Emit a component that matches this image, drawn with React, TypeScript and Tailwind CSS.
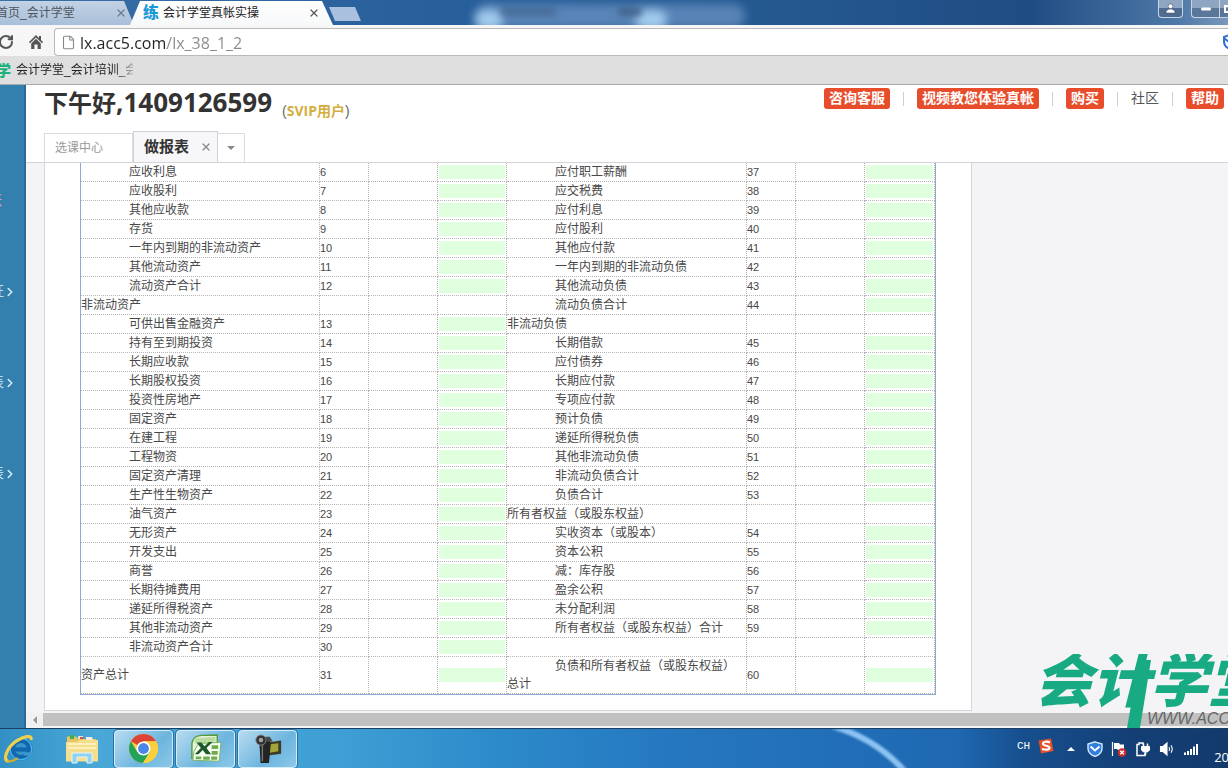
import type { ReactNode } from "react";
import { ChevronRight, File, Minus, RotateCw, X } from "lucide-react";

const CJK = "font-['Liberation_Sans','Noto_Sans_CJK_SC',sans-serif]";

type Side = { name: string; line?: number; top?: boolean; input: boolean };

const item = (name: string, line: number): Side => ({ name, line, input: true });
const heading = (name: string, line?: number, input = false): Side => ({ name, line, top: true, input });

const assets: Side[] = [
  item("应收利息", 6),
  item("应收股利", 7),
  item("其他应收款", 8),
  item("存货", 9),
  item("一年内到期的非流动资产", 10),
  item("其他流动资产", 11),
  item("流动资产合计", 12),
  heading("非流动资产"),
  item("可供出售金融资产", 13),
  item("持有至到期投资", 14),
  item("长期应收款", 15),
  item("长期股权投资", 16),
  item("投资性房地产", 17),
  item("固定资产", 18),
  item("在建工程", 19),
  item("工程物资", 20),
  item("固定资产清理", 21),
  item("生产性生物资产", 22),
  item("油气资产", 23),
  item("无形资产", 24),
  item("开发支出", 25),
  item("商誉", 26),
  item("长期待摊费用", 27),
  item("递延所得税资产", 28),
  item("其他非流动资产", 29),
  item("非流动资产合计", 30),
  heading("资产总计", 31, true),
];

const liabilities: Side[] = [
  item("应付职工薪酬", 37),
  item("应交税费", 38),
  item("应付利息", 39),
  item("应付股利", 40),
  item("其他应付款", 41),
  item("一年内到期的非流动负债", 42),
  item("其他流动负债", 43),
  item("流动负债合计", 44),
  heading("非流动负债"),
  item("长期借款", 45),
  item("应付债券", 46),
  item("长期应付款", 47),
  item("专项应付款", 48),
  item("预计负债", 49),
  item("递延所得税负债", 50),
  item("其他非流动负债", 51),
  item("非流动负债合计", 52),
  item("负债合计", 53),
  heading("所有者权益（或股东权益）"),
  item("实收资本（或股本）", 54),
  item("资本公积", 55),
  item("减：库存股", 56),
  item("盈余公积", 57),
  item("未分配利润", 58),
  item("所有者权益（或股东权益）合计", 59),
  heading(""),
  item("负债和所有者权益（或股东权益）总计", 60),
];

const cell = "border-b border-r border-dotted border-[#b4b4b4] p-0 align-middle h-[19px]";

function SideCells({ side }: { side: Side }) {
  return (
    <>
      <td className={`${cell} ${side.top ? "" : "indent-12"}`}>{side.name}</td>
      <td className={`${cell} text-[11px]`}>{side.line}</td>
      <td className={cell} />
      <td className={`${cell} px-px`}>
        {side.input && (
          <input type="text" aria-label={side.name} className="block h-[14px] w-full bg-[#dfffdf] px-1 text-right text-[11px] outline-none" />
        )}
      </td>
    </>
  );
}

function BalanceTable() {
  return (
    <table className="w-[856px] table-fixed border-separate border-spacing-0 border-x border-b border-[#8fa9d0] text-[12px] leading-[18px] text-[#484848]">
      <colgroup>
        <col className="w-[239px]" />
        <col className="w-[49px]" />
        <col className="w-[69px]" />
        <col className="w-[69px]" />
        <col className="w-[240px]" />
        <col className="w-[49px]" />
        <col className="w-[69px]" />
        <col className="w-[70px]" />
      </colgroup>
      <tbody>
        {assets.map((a, i) => (
          <tr key={i}>
            <SideCells side={a} />
            <SideCells side={liabilities[i]} />
          </tr>
        ))}
      </tbody>
    </table>
  );
}

function TabStrip() {
  return (
    <div className="relative flex h-[25px] shrink-0 items-end overflow-hidden bg-[linear-gradient(to_right,#3a6ea8_0%,#28609c_35%,#24588f_65%,#1f4c83_84%,#4f79a8_96%,#7a98bb_100%)]">
      <div className="absolute left-[475px] top-1 h-6 w-[270px] rounded-full bg-[#6d95c6]/70 blur-[5px]" />
      <div className="absolute left-[475px] top-2.5 h-5 w-7 rounded-full bg-[#b5dcfb]/80 blur-[5px]" />
      <div className="absolute left-[635px] top-2.5 h-5 w-8 rounded-full bg-[#b5dcfb]/80 blur-[5px]" />
      <div className="absolute left-[500px] top-2 h-2 w-14 rounded-full bg-[#3d5b80]/60 blur-[3px]" />
      <div className="absolute left-[618px] top-2 h-2 w-6 rounded-full bg-[#3d5b80]/80 blur-[3px]" />
      <div className="relative flex h-6 w-[134px] items-center justify-between bg-[linear-gradient(to_bottom,#c3d2e4,#a9bfd9)] pr-[7px] text-[12px] text-[#4d5660] [clip-path:polygon(0_0,124px_0,134px_100%,0_100%)]">
        <span className="-ml-1 whitespace-nowrap">首页_会计学堂</span>
        <button type="button" aria-label="关闭">
          <X className="size-3 text-[#6c7b8c]" strokeWidth={2.4} />
        </button>
      </div>
      <div className="relative -ml-1 flex h-6 w-[203px] items-center bg-[linear-gradient(to_bottom,#ffffff,#f7f8f9)] pl-[13px] pr-[13px] text-[12px] text-[#222] [clip-path:polygon(10px_0,192px_0,100%_100%,0_100%)]">
        <span className="text-[16px] font-black leading-none text-[#1b9ad8]">练</span>
        <span className="ml-1 flex-1">会计学堂真帐实操</span>
        <button type="button" aria-label="关闭">
          <X className="size-3 text-[#555]" strokeWidth={2.4} />
        </button>
      </div>
      <button type="button" aria-label="新标签" className="relative -ml-1 mb-1 h-[14px] w-[32px] bg-[#a9c0de] [clip-path:polygon(0_0,26px_0,100%_100%,6px_100%)]" />
      <div className="relative ml-auto flex gap-2 self-start">
        <button type="button" aria-label="用户" className="flex h-[18px] w-[25px] items-center justify-center rounded-b border border-t-0 border-[#c8d5e4] bg-[linear-gradient(to_bottom,#8fa6c3_50%,#4e6b90_50%)]">
          <svg viewBox="0 0 12 12" className="size-[11px]" fill="#fff" stroke="#3c4d63" strokeWidth="0.6">
            <circle cx="6" cy="3.6" r="2.6" />
            <path d="M1 11c0-3 2-4.4 5-4.4s5 1.4 5 4.4z" />
          </svg>
        </button>
        <div className="flex h-[18px] rounded-bl border border-r-0 border-t-0 border-[#c8d5e4] bg-[linear-gradient(to_bottom,#8fa6c3_50%,#5a7699_50%)]">
          <button type="button" aria-label="最小化" className="flex w-[28px] items-center justify-center border-r border-[#c8d5e4]">
            <Minus className="size-3 text-white" strokeWidth={6} />
          </button>
          <button type="button" aria-label="最大化" className="flex w-[8px] items-center justify-end">
            <span className="h-2 w-1 border-2 border-r-0 border-white" />
          </button>
        </div>
      </div>
    </div>
  );
}

function Toolbar() {
  return (
    <div className="flex h-[31px] shrink-0 items-end bg-[#f6f6f7]">
      <button type="button" aria-label="刷新" className="-ml-0.5 mb-1.5">
        <RotateCw className="size-4 text-[#555]" strokeWidth={3} />
      </button>
      <button type="button" aria-label="主页" className="ml-3.5 mb-1.5">
        <svg viewBox="0 0 16 16" className="size-4" fill="#555">
          <path d="M8 1 1 8l1 1.2L8 3.4l6 5.8L15 8l-2-2V2h-2v2z" />
          <path d="M3.2 9.4 8 4.8l4.8 4.6V15H9.6v-4.4H6.4V15H3.2z" />
        </svg>
      </button>
      <div className="ml-[10px] flex h-[28px] min-w-0 flex-1 items-center overflow-hidden rounded-l-sm border border-r-0 border-[#b9b9b9] bg-white">
        <File className="ml-1.5 size-[15px] shrink-0 text-[#888]" strokeWidth={1.8} />
        <input
          type="text"
          aria-label="地址"
          defaultValue="lx.acc5.com/lx_38_1_2"
          className="ml-[4px] min-w-0 flex-1 bg-[linear-gradient(to_right,#222_87px,#8a8a8a_87px)] bg-clip-text pt-0.5 font-['Open_Sans','Noto_Sans_CJK_SC',sans-serif] text-[16px] leading-6 text-transparent outline-none"
        />
        <svg viewBox="0 0 18 18" className="-mr-3 size-[18px] shrink-0" fill="none" stroke="#2f6fd6" strokeWidth="2">
          <path d="M9 1.4 16 4v4.5c0 4-3 6.700-7 8-4-1.300-7-4-7-8V4z" />
          <path d="m2.500 5.500 6.500 5 6.500-5" />
        </svg>
      </div>
    </div>
  );
}

function Bookmarks() {
  return (
    <div className="flex h-[29px] shrink-0 items-center border-b border-[#a9a9a9] bg-[#dfdfdf] text-[12px] text-[#222]">
      <a href="#" className="flex items-center">
        <span className="-ml-1 w-4 text-[15px] font-black leading-none text-[#1cb37d]">学</span>
        <span className="ml-1 w-[117px] overflow-hidden whitespace-nowrap [mask-image:linear-gradient(to_right,#000_98px,#0004_117px)]">会计学堂_会计培训_会计</span>
      </a>
    </div>
  );
}

function Sidebar() {
  const entries = [
    { label: "账", open: false },
    { label: "证", open: true },
    { label: "表", open: true },
    { label: "表", open: true },
  ];
  return (
    <nav className="w-[26px] shrink-0 overflow-hidden border-r-2 border-[#2a6c95] bg-[#337fad] pt-[70px]">
      {entries.map((e, i) => (
        <a key={i} href="#" className="flex h-[91px] items-center text-[14px] text-[#b9dcf0]">
          {e.open ? (
            <>
              <span className="flex w-1 justify-end overflow-hidden">{e.label}</span>
              <ChevronRight className="-ml-px size-[14px] text-[#d6edf9]" strokeWidth={2.6} />
            </>
          ) : (
            <span className="flex w-0.5 justify-end overflow-hidden text-[#e3a0b4]">{e.label}</span>
          )}
        </a>
      ))}
    </nav>
  );
}

function RedLink({ children }: { children: ReactNode }) {
  return (
    <a href="#" className="rounded-[3px] bg-[#e84d2b] px-[5px] text-[14px] font-bold leading-[21px] text-white">
      {children}
    </a>
  );
}

function Divider() {
  return <span className="h-[14px] w-px bg-[#cfcfcf]" />;
}

function Header() {
  return (
    <header className="flex h-[78px] shrink-0 flex-col justify-between border-b border-[#d4d4d8] bg-white">
      <div className="flex items-start justify-between pl-[18px] pr-1">
        <div className="flex h-[38px] items-center">
          <h1 className="whitespace-nowrap text-[24px] font-bold leading-9 text-[#333]">
            下午好<span className="font-['Open_Sans',sans-serif] text-[26px] leading-none">,1409126599</span>
          </h1>
          <span className="ml-2.5 mt-3.5 whitespace-nowrap text-[14px] leading-5 text-[#666]">
            (<b className="font-['Open_Sans','Noto_Sans_CJK_SC',sans-serif] text-[#d6ad3f]">SVIP用户</b>)
          </span>
        </div>
        <div className="mt-[3px] flex items-center gap-[13px] whitespace-nowrap">
          <RedLink>咨询客服</RedLink>
          <Divider />
          <RedLink>视频教您体验真帐</RedLink>
          <Divider />
          <RedLink>购买</RedLink>
          <Divider />
          <a href="#" className="text-[14px] leading-[21px] text-[#555]">社区</a>
          <Divider />
          <RedLink>帮助</RedLink>
        </div>
      </div>
      <div className="ml-[18px] flex items-end">
        <button type="button" className="h-[29px] w-[89px] border border-b-0 border-[#dcdce0] bg-white pl-2.5 text-left text-[12px] text-[#999]">
          选课中心
        </button>
        <div className="flex h-[31px] w-[85px] items-center justify-between border border-b-0 border-[#d0d0d6] bg-[#f7f6f8] pl-2.5 pr-[5px]">
          <button type="button" className="whitespace-nowrap text-[15px] font-bold text-[#333]">做报表</button>
          <button type="button" aria-label="关闭">
            <X className="size-3 text-[#888]" strokeWidth={2.4} />
          </button>
        </div>
        <button type="button" aria-label="更多" className="flex h-[29px] w-[27px] items-center justify-center border border-b-0 border-l-0 border-[#dcdce0] bg-white">
          <span className="size-0 border-x-4 border-t-4 border-x-transparent border-t-[#888]" />
        </button>
      </div>
    </header>
  );
}

function Watermark() {
  return (
    <div className="pointer-events-none absolute bottom-0 right-0 flex w-[194px] flex-col overflow-hidden">
      <div className="whitespace-nowrap text-[58px] font-black italic leading-[56px] text-[#18ab83]">会计学堂</div>
      <div className="ml-[113px] whitespace-nowrap pb-px text-[16px] italic leading-[17px] text-[#666]">WWW.ACC5.COM</div>
      <div className="absolute bottom-0 left-[93px] h-[68px] w-[24px] bg-[#18ab83] [clip-path:polygon(12px_0,24px_0,13px_100%,0_100%)]" />
    </div>
  );
}

function TaskButton({ label, children }: { label: string; children: ReactNode }) {
  return (
    <button
      type="button"
      aria-label={label}
      className="flex h-[38px] w-[59px] items-center justify-center rounded-sm border border-[#d3ecfa] bg-[linear-gradient(135deg,#b8dcf0,#6db5de_60%,#8cc8e8)] shadow-[0_0_0_1px_#2b6fa3]"
    >
      {children}
    </button>
  );
}

function IeIcon() {
  return (
    <svg viewBox="0 0 34 32" className="h-[30px] w-8" fill="none">
      <circle cx="19" cy="16" r="9.500" stroke="#1268b0" strokeWidth="6" />
      <circle cx="19" cy="16" r="11.500" stroke="#49b4e8" strokeWidth="1.500" />
      <path d="M10 16.500h18" stroke="#1268b0" strokeWidth="4.500" />
      <path d="M22 19.500h10v3.500h-10z" fill="#3e98cd" />
      <path d="M5 29C-1 27 5 13 15 7c7-4.500 15-6 15-2" stroke="#f0cf4c" strokeWidth="3.400" strokeLinecap="round" />
      <path d="M5 29c3 1 7-1 10-3" stroke="#d9ac25" strokeWidth="2" strokeLinecap="round" />
    </svg>
  );
}

function FolderIcon() {
  return (
    <svg viewBox="0 0 34 30" className="h-[30px] w-[34px]">
      <path d="M2 5V2.500h9L13 5h18v22H2z" fill="#e8c562" />
      <path d="M5 1h4v4H5z" fill="#3faf4a" />
      <path d="M13 2h5v3h-5z" fill="#e8e2d0" />
      <path d="M15 3h3v2h-3z" fill="#d65436" />
      <path d="M21 3h6l1 3h-7z" fill="#f4efdc" />
      <path d="M1 8h11l2-2h19v21.500H1z" fill="#f5df8e" />
      <path d="M3 10h28M3 14h28" stroke="#fff6c9" strokeWidth="1.500" />
      <path d="M7 29V19h20v10h-5v-6H12v6z" fill="#8fd2f2" stroke="#e3f5ff" strokeWidth="1" />
    </svg>
  );
}

function ChromeIcon() {
  return (
    <svg viewBox="0 0 32 32" className="size-[31px]">
      <circle cx="16" cy="16" r="15" fill="#f8cf3d" />
      <path d="M16 16 3 8.500A15 15 0 0 1 29 8.500H16z" fill="#dc4437" />
      <path d="M3 8.500A15 15 0 0 0 15.500 31L22.500 19.500 16 16 9.500 19.500z" fill="#23a35a" />
      <path d="M16 8.500h13a15 15 0 0 1-13.500 22.500l7-11.500z" fill="#f8cf3d" />
      <circle cx="16" cy="16" r="7.200" fill="#fff" />
      <circle cx="16" cy="16" r="5.600" fill="#4a86e8" />
    </svg>
  );
}

function ExcelIcon() {
  return (
    <svg viewBox="0 0 34 32" className="h-[30px] w-8">
      <path d="M2 26V10C3 4 6 2 12 1.500L29 1v9H12v16z" fill="#e6f3da" stroke="#539a3f" strokeWidth="1.500" />
      <path d="M5 4.500 27 3v5L5 10z" fill="#b9dca0" />
      <path d="m9 10 24-1-2 20-28-1 1-9z" fill="#f8fff2" stroke="#7bb25f" strokeWidth="1" />
      <path d="M23 12h7v4h-7zM23 18h6.500v4H23zM22.500 24h6.500v3.500h-6.500zM14 24h7v3.500h-7zM6 24h6v3h-6z" fill="#70ac4e" />
      <path d="M7 9h5l3.500 4L20 8.500h4L17.500 15l5 6.500h-5.500L13.500 17 9 21.500H5L11.500 15z" fill="#1f5a2b" />
    </svg>
  );
}

function CameraIcon() {
  return (
    <svg viewBox="0 0 34 32" className="h-[30px] w-8">
      <path d="M17 9 31 7v14l-14 2z" fill="#3c3d24" />
      <path d="m19 11 9-1.200v8.700l-9 1.500z" fill="#a3a43a" />
      <path d="M9 5h9l2 5-2 21H9L8 12z" fill="#242424" />
      <path d="M11 12v17" stroke="#777" strokeWidth="1.500" />
      <circle cx="9.500" cy="6.500" r="5.500" fill="#333" stroke="#888" strokeWidth="1" />
      <circle cx="9.500" cy="6.500" r="2.400" fill="#9fa4ab" />
      <path d="M14 3h5l3 5h-6z" fill="#4c4c4c" />
    </svg>
  );
}

function Tray() {
  return (
    <div className="relative ml-auto flex h-full items-center text-white">
      <span className="mb-1 font-['Liberation_Mono',monospace] text-[11px]">CH</span>
      <svg viewBox="0 0 16 16" className="mb-1.5 ml-2 size-4">
        <path d="m.5 2.500 12.500-2L15.500 13 3 15.500z" fill="#e8502c" />
        <path d="M12 4.500C9 3 5 3.500 5 5.800c0 2.400 6.500 1.600 6.500 4 0 2.200-4.500 2.400-7.500.9" fill="none" stroke="#fff" strokeWidth="2.200" />
      </svg>
      <span className="ml-[13px] size-0 border-x-4 border-b-4 border-x-transparent border-b-white" />
      <svg viewBox="0 0 16 16" className="ml-3 size-4" fill="none">
        <path d="M8 .8 15 3v4.500c0 4-3 6.500-7 8-4-1.500-7-4-7-8V3z" fill="#2f7ee0" stroke="#d5ecff" strokeWidth="1.400" />
        <path d="m3.500 5.500 4.500 4 4.500-4" stroke="#fff" strokeWidth="2" />
      </svg>
      <svg viewBox="0 0 16 16" className="ml-2 size-4">
        <path d="M1.500 1v14" stroke="#fff" strokeWidth="1.200" />
        <path d="M3 2h5l1 1.500h4V9H7L6 8H3z" fill="#fff" />
        <circle cx="11" cy="11.500" r="4.300" fill="#cf2c2c" />
        <path d="m9.200 9.700 3.600 3.600m0-3.600-3.600 3.600" stroke="#fff" strokeWidth="1.400" />
      </svg>
      <svg viewBox="0 0 16 16" className="ml-2 size-4" fill="none" stroke="#fff">
        <path d="M8 3.500V2H4v1.500H2v11h8V12" strokeWidth="1.500" />
        <path d="M8.500 2.500v3m4-3v3" strokeWidth="1.500" />
        <path d="M6.500 5.500h8v3.500l-2 2h-4l-2-2z" fill="#fff" />
        <path d="M10.500 11v3" strokeWidth="1.500" />
      </svg>
      <svg viewBox="0 0 16 16" className="ml-2 size-4" fill="none" stroke="#fff" strokeWidth="1.100">
        <path d="M1.500 5.500H4L8 2v12l-4-3.500H1.500z" fill="#fff" />
        <path d="M10 6q1.300 2 0 4M12 4.300q2.500 3.700 0 7.400" />
      </svg>
      <svg viewBox="0 0 16 16" className="ml-2 size-4" fill="#fff">
        <path d="M1 11.500h2V14H1zM4 10h2v4H4zM7 8h2v6H7zM10 5.500h2V14h-2zM13 3h2v11h-2z" />
      </svg>
      <span className="-mr-px ml-[15px] mt-4 font-['Open_Sans',sans-serif] text-[13px] leading-4">20</span>
    </div>
  );
}

function Taskbar() {
  return (
    <footer className="relative flex h-10 shrink-0 items-center overflow-hidden border-t border-[#1b3f63] bg-[linear-gradient(to_right,#3290c4_0%,#4aa8d8_8%,#3d9fd4_28%,#2d8bca_40%,#2577c0_55%,#1f68b2_78%,#17508f_83%,#143f76_92%,#133a6c_100%)]">
      <svg viewBox="0 0 120 40" className="absolute left-[820px] top-0 h-10 w-[120px] blur-[1px]" fill="none" stroke="#8cc3f2" strokeWidth="6">
        <path d="M8-4Q56 8 88 46" />
      </svg>
      <div className="relative flex items-center">
        <button type="button" aria-label="浏览器" className="ml-[3px]"><IeIcon /></button>
        <button type="button" aria-label="文件夹" className="ml-[30px]"><FolderIcon /></button>
        <div className="ml-[15px] flex gap-[3px]">
          <TaskButton label="网页"><ChromeIcon /></TaskButton>
          <TaskButton label="表格"><ExcelIcon /></TaskButton>
          <TaskButton label="录像"><CameraIcon /></TaskButton>
        </div>
      </div>
      <Tray />
    </footer>
  );
}

export default function App() {
  return (
    <div className={`flex h-screen flex-col overflow-hidden bg-[#f4f4f4] ${CJK}`}>
      <TabStrip />
      <Toolbar />
      <Bookmarks />
      <div className="relative flex min-h-0 flex-1">
        <Sidebar />
        <div className="flex min-w-0 flex-1 flex-col">
          <Header />
          <main className="min-h-0 flex-1 overflow-hidden bg-[#f4f3f5] pl-[18px]">
            <section className="w-[928px] border-x border-b border-[#d6d6da] bg-white pb-[15px] pl-[35px]">
              <BalanceTable />
            </section>
          </main>
          <div className="flex h-[15px] shrink-0 border-b-2 border-[#f4f4f4] bg-[#f1f1f1]">
            <button type="button" aria-label="向左" className="flex w-[17px] items-center justify-center">
              <span className="size-0 border-y-4 border-r-4 border-y-transparent border-r-[#999]" />
            </button>
            <div className="flex-1 bg-[#c1c1c1]" />
          </div>
        </div>
        <Watermark />
      </div>
      <Taskbar />
    </div>
  );
}
